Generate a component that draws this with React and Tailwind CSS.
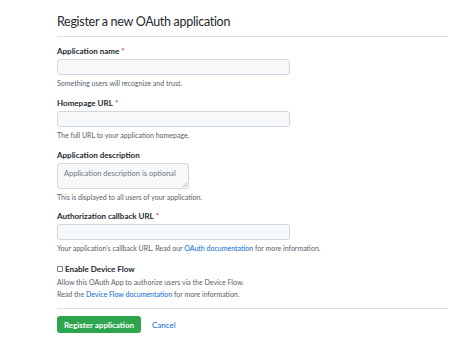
export default function App() {
  const font = { fontFamily: 'Lato, "Noto Sans", sans-serif' };
  const Label = ({ children, req }) => (
    <div className="text-[8px] leading-[12px] font-bold text-[#24292f] mb-[2px]">
      {children}
      {req && <span className="text-[#cf222e] font-normal"> *</span>}
    </div>
  );
  const Help = ({ children }) => (
    <div className="text-[7px] leading-[10px] text-[#57606a] mt-[3px]">{children}</div>
  );
  const Input = () => (
    <div className="w-[233px] h-[16px] rounded-[3px] border border-[#d0d7de] bg-[#f6f8fa]" />
  );
  return (
    <div className="w-[474px] h-[351px] bg-white overflow-hidden" style={font}>
      <div className="pl-[57px] pt-[12px] w-[448px]">
        <h2 className="text-[12.5px] leading-[20px] tracking-[-0.3px] font-normal text-[#24292f] pb-[4px] border-b border-[#d8dee4]">
          Register a new OAuth application
        </h2>
        <div className="mt-[8px]">
          <Label req>Application name</Label>
          <Input />
          <Help>Something users will recognize and trust.</Help>
        </div>
        <div className="mt-[9px]">
          <Label req>Homepage URL</Label>
          <Input />
          <Help>The full URL to your application homepage.</Help>
        </div>
        <div className="mt-[9px]">
          <Label>Application description</Label>
          <div className="relative w-[132px] h-[26px] rounded-[3px] border border-[#d0d7de] bg-[#f6f8fa] px-[6px] pt-[5px] text-[7.5px] leading-[10px] text-[#6e7781] whitespace-nowrap">
            Application description is optional
            <svg className="absolute right-[1px] bottom-[1px]" width="5" height="5" viewBox="0 0 5 5">
              <path d="M1 5L5 1M3 5L5 3" stroke="#8c959f" strokeWidth="0.6" />
            </svg>
          </div>
          <Help>This is displayed to all users of your application.</Help>
        </div>
        <div className="mt-[8px]">
          <Label req>Authorization callback URL</Label>
          <Input />
          <Help>
            Your application's callback URL. Read our{" "}
            <span className="text-[#0969da]">OAuth documentation</span> for more information.
          </Help>
        </div>
        <div className="mt-[10px] flex items-center gap-[2px] text-[8px] leading-[12px] font-bold text-[#24292f]">
          <div className="w-[6px] h-[6px] border border-[#767676] rounded-[1px] bg-white" />
          <span>Enable Device Flow</span>
        </div>
        <div className="mt-[1px] text-[7px] leading-[12px] text-[#57606a]">
          <div>Allow this OAuth App to authorize users via the Device Flow.</div>
          <div>
            Read the <span className="text-[#0969da]">Device Flow documentation</span> for more information.
          </div>
        </div>
        <div className="mt-[8px] border-t border-[#d8dee4]" />
        <div className="mt-[7px] flex items-center">
          <div className="w-[84px] h-[17px] rounded-[3px] bg-[#2da44e] text-white text-[8px] font-bold flex items-center justify-center">
            Register application
          </div>
          <div className="ml-[11px] text-[8px] text-[#0969da]">Cancel</div>
        </div>
      </div>
    </div>
  );
}
